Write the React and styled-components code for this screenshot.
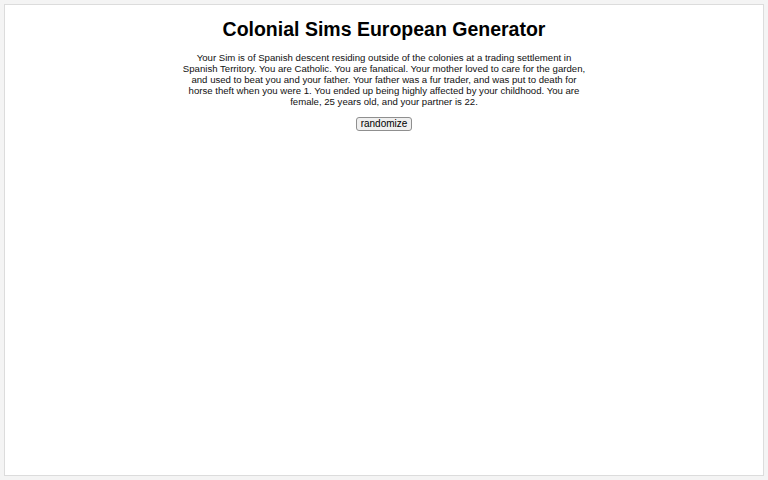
import React from 'react'
import styled, { createGlobalStyle } from 'styled-components'

const GlobalStyle = createGlobalStyle`
  html, body {
    margin: 0;
    padding: 0;
    background: #f4f4f4;
    font-family: "Liberation Sans", Arial, sans-serif;
  }
`

const Page = styled.div`
  padding: 4px;
  height: 480px;
  box-sizing: border-box;
`

const Card = styled.div`
  background: #fff;
  border: 1px solid #dcdcdc;
  height: 100%;
  box-sizing: border-box;
  display: flex;
  flex-direction: column;
  align-items: center;
`

const Title = styled.h1`
  margin: 12px 0 0;
  font-size: 19.5px;
  line-height: 24px;
  font-weight: bold;
  color: #000;
`

const Story = styled.p`
  margin: 12px 0 0;
  width: 404px;
  font-size: 9.6px;
  line-height: 10.9px;
  text-align: center;
  color: #111;
`

const Button = styled.button`
  margin-top: 9px;
  font-family: "Liberation Sans", Arial, sans-serif;
  font-size: 10px;
  line-height: 12px;
  padding: 0 4px;
  background: #efefef;
  border: 1px solid #8f8f8f;
  border-radius: 3px;
  color: #000;
`

const App = () => {
  return (
    <>
      <GlobalStyle />
      <Page>
        <Card>
          <Title>Colonial Sims European Generator</Title>
          <Story>
            Your Sim is of Spanish descent residing outside of the colonies at a trading settlement in Spanish Territory. You are Catholic. You are fanatical. Your mother loved to care for the garden, and used to beat you and your father. Your father was a fur trader, and was put to death for horse theft when you were 1. You ended up being highly affected by your childhood. You are female, 25 years old, and your partner is 22.
          </Story>
          <Button>randomize</Button>
        </Card>
      </Page>
    </>
  )
}

export default App
